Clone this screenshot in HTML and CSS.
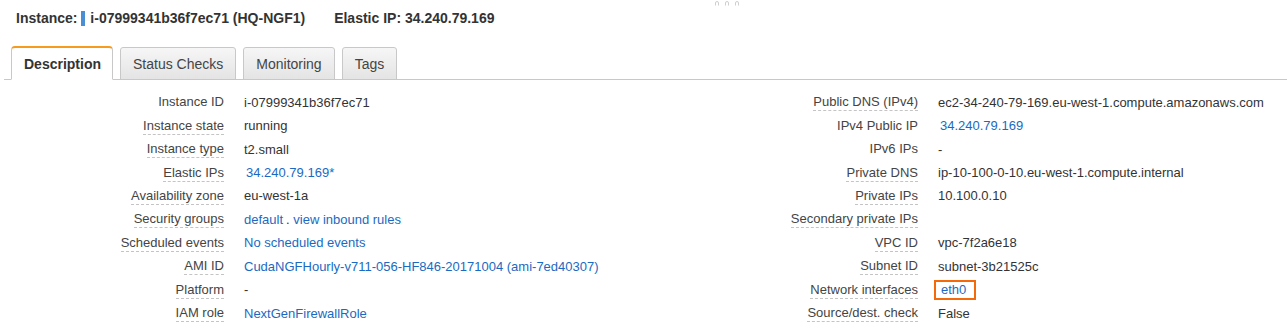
FILE: index.html
```html
<!DOCTYPE html>
<html>
<head>
<meta charset="utf-8">
<link rel="stylesheet" href="styles.css">
</head>
<body>
<div class="handle">
  <svg width="24" height="5" viewBox="0 0 24 5"><path d="M0.5 4.5V2Q0.5 0.5 2 0.5Q3.5 0.5 3.5 2V4.5M10.5 4.5V2Q10.5 0.5 12 0.5Q13.5 0.5 13.5 2V4.5M20.5 4.5V2Q20.5 0.5 22 0.5Q23.5 0.5 23.5 2V4.5" fill="none" stroke="#cfcfcf" stroke-width="1"/></svg>
</div>
<header class="head">
  <span class="head-item">Instance: <span class="bar"></span>i-07999341b36f7ec71 (HQ-NGF1)</span>
  <span class="head-item">Elastic IP: 34.240.79.169</span>
</header>
<nav class="tabs">
  <div class="tab active">Description</div>
  <div class="tab">Status Checks</div>
  <div class="tab">Monitoring</div>
  <div class="tab">Tags</div>
</nav>
<main class="details">
  <dl class="props left">
    <dt><span>Instance ID</span></dt><dd>i-07999341b36f7ec71</dd>
    <dt><span class="u">Instance state</span></dt><dd>running</dd>
    <dt><span class="u">Instance type</span></dt><dd>t2.small</dd>
    <dt><span class="u">Elastic IPs</span></dt><dd><a class="lk sp">34.240.79.169*</a></dd>
    <dt><span class="u">Availability zone</span></dt><dd>eu-west-1a</dd>
    <dt><span class="u">Security groups</span></dt><dd><a class="lk">default</a><span class="dot">.</span> <a class="lk">view inbound rules</a></dd>
    <dt><span class="u">Scheduled events</span></dt><dd><a class="lk">No scheduled events</a></dd>
    <dt><span class="u">AMI ID</span></dt><dd><a class="lk">CudaNGFHourly-v711-056-HF846-20171004 (ami-7ed40307)</a></dd>
    <dt><span class="u">Platform</span></dt><dd>-</dd>
    <dt><span class="u">IAM role</span></dt><dd><a class="lk">NextGenFirewallRole</a></dd>
  </dl>
  <dl class="props right">
    <dt><span class="u">Public DNS (IPv4)</span></dt><dd>ec2-34-240-79-169.eu-west-1.compute.amazonaws.com</dd>
    <dt><span>IPv4 Public IP</span></dt><dd><a class="lk sp">34.240.79.169</a></dd>
    <dt><span>IPv6 IPs</span></dt><dd>-</dd>
    <dt><span class="u">Private DNS</span></dt><dd>ip-10-100-0-10.eu-west-1.compute.internal</dd>
    <dt><span class="u">Private IPs</span></dt><dd>10.100.0.10</dd>
    <dt><span class="u">Secondary private IPs</span></dt><dd></dd>
    <dt><span class="u">VPC ID</span></dt><dd>vpc-7f2a6e18</dd>
    <dt><span class="u">Subnet ID</span></dt><dd>subnet-3b21525c</dd>
    <dt><span class="u">Network interfaces</span></dt><dd><a class="lk boxed">eth0</a></dd>
    <dt><span class="u">Source/dest. check</span></dt><dd>False</dd>
  </dl>
</main>
</body>
</html>
```
FILE: styles.css
```css
* { box-sizing: border-box; }
html, body { margin: 0; padding: 0; background: #fff; }
body {
  font-family: "Liberation Sans", Arial, sans-serif;
  color: #333;
  width: 1287px;
  height: 328px;
  overflow: hidden;
  position: relative;
}
.handle {
  position: absolute;
  left: 715px;
  top: 1px;
  line-height: 0;
}
.head {
  display: flex;
  align-items: flex-start;
  gap: 29px;
  padding: 9px 0 0 16px;
  height: 46px;
  font-size: 14px;
  font-weight: bold;
  color: #333;
  line-height: 18px;
}
.head-item { display: inline-flex; align-items: center; white-space: pre; height: 18px; }
.bar {
  display: inline-block;
  width: 4px;
  height: 15px;
  background: #4a8fd4;
  margin: 0 5px 0 0;
}
.tabs {
  display: flex;
  gap: 7px;
  margin-left: 4px;
  padding-left: 7px;
  border-bottom: 1px solid #c8c8c8;
  height: 34px;
  align-items: flex-end;
}
.tab {
  height: 33px;
  margin-bottom: -1px;
  padding: 0 12px;
  display: flex;
  align-items: center;
  font-size: 14px;
  color: #444;
  background: linear-gradient(#f6f6f6, #e4e4e4);
  border: 1px solid #c8c8c8;
  border-radius: 3px 3px 0 0;
}
.tab.active {
  height: 34px;
  padding: 0 11px 0 12px;
  background: #fff;
  font-weight: bold;
  color: #333;
  border-top: 2px solid #f79b1f;
  border-bottom-color: #fff;
  border-radius: 4px 4px 0 0;
}
.details {
  display: flex;
  padding-top: 11px;
}
.props {
  margin: 0;
  display: grid;
  grid-template-columns: 224px 1fr;
  column-gap: 20px;
  grid-auto-rows: 23.45px;
  align-items: center;
  font-size: 13px;
  line-height: 16px;
}
.props.left { width: 694px; }
.props.right { flex: 1; }
dt { text-align: right; color: #444; white-space: nowrap; }
dt span { display: inline-block; border-bottom: 1px solid transparent; }
dt span.u { border-bottom: 1px dashed #c4c4c4; }
dd { margin: 0; color: #333; white-space: nowrap; }
.lk { color: #1b6ac1; text-decoration: none; }
.lk.sp { margin-left: 2px; }
.dot { margin-left: 3px; }
.boxed {
  display: inline-block;
  margin-left: -4px;
  padding: 0 8px 0 5px;
  line-height: 16px;
  border: 2px solid #f46a0a;
}
```
